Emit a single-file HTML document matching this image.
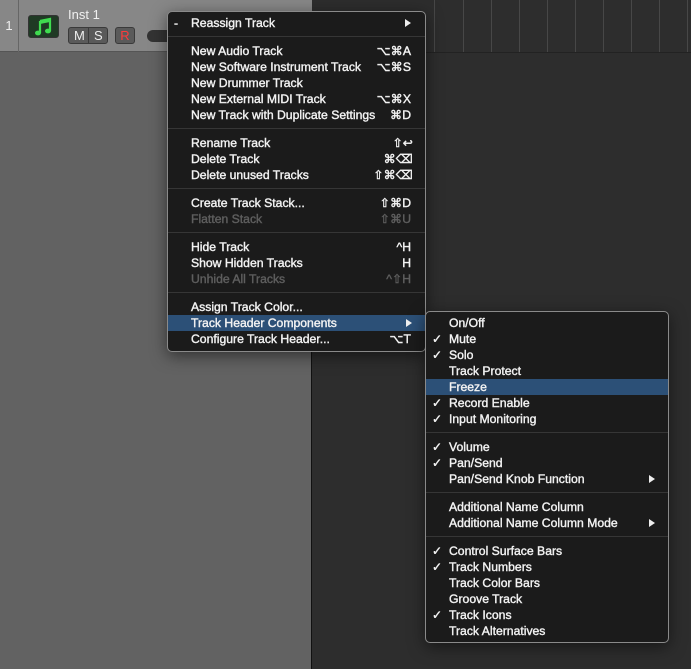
<!DOCTYPE html>
<html><head><meta charset="utf-8"><style>
*{margin:0;padding:0;box-sizing:border-box}
body{width:691px;height:669px;position:relative;overflow:hidden;background:#2d2d2d;font-family:"Liberation Sans",sans-serif;font-size:12.2px;color:#f2f2f2}
.left{position:absolute;left:0;top:0;width:312px;height:669px;background:#626262;border-right:1px solid #111}
.hdr{position:absolute;left:0;top:0;width:312px;height:52px;background:#878787;border-bottom:1px solid #555}
.num{position:absolute;left:0;top:0;width:19px;height:52px;border-right:1px solid #666;color:#eee;font-size:13px;text-align:center;line-height:52px}
.icon{position:absolute;left:28px;top:15px;width:31px;height:23px;background:#1f3a24;border-radius:3px;border:1px solid #333}
.name{position:absolute;left:68px;top:7px;font-size:13px;color:#f0f0f0}
.btn{position:absolute;top:27px;height:17px;background:#5a5a5a;border:1px solid #3a3a3a;border-radius:3px;color:#eee;font-size:13px;line-height:15px;text-align:center}
.knob{position:absolute;left:147px;top:30px;width:30px;height:12px;background:#333;border-radius:6px}
.grid{position:absolute;top:0;width:1px;height:52px;background:#474747}
.hline{position:absolute;left:313px;top:52px;right:0;height:1px;background:#222}
.menu{position:absolute;background:#1b1b1b;border:1px solid #8a8a8a;border-radius:5px;box-shadow:0 4px 16px rgba(0,0,0,.5)}
.r{position:absolute;left:0;right:0;height:16px;line-height:16px;white-space:nowrap;-webkit-text-stroke:0.4px #f2f2f2}
.r.d{color:#5e5e5e;-webkit-text-stroke:0.4px #5e5e5e}
.r.h{background:#2c5077}
.r .t{position:absolute}
.r .k{position:absolute;text-align:right}
.sep{position:absolute;left:0;right:0;height:1px;background:#363636}
.arr{position:absolute;width:0;height:0;border-top:4px solid transparent;border-bottom:4px solid transparent;border-left:6px solid #eee;top:4px}
</style></head><body>
<div class="left"></div>
<div class="hdr">
<div class="num">1</div>
<div class="icon"><svg width="31" height="23" viewBox="0 0 31 23"><path d="M11 5 L21 3 L21 15" stroke="#3fdc4f" stroke-width="2.2" fill="none"/><path d="M11 5 L11 17" stroke="#3fdc4f" stroke-width="2.2"/><ellipse cx="9" cy="17" rx="3" ry="2.4" fill="#3fdc4f"/><ellipse cx="19" cy="15" rx="3" ry="2.4" fill="#3fdc4f"/><path d="M11 5 L21 3 L21 6 L11 8Z" fill="#3fdc4f"/></svg></div>
<div class="name">Inst 1</div>
<div class="btn" style="left:68px;width:40px;"><span style="position:absolute;left:5px">M</span><span style="position:absolute;left:19px;top:0;width:1px;height:15px;background:#3a3a3a"></span><span style="position:absolute;left:25px">S</span></div>
<div class="btn" style="left:115px;width:20px;color:#ff3b3b">R</div>
<div class="knob"></div>
</div>
<div class="grid" style="left:434px"></div><div class="grid" style="left:463px"></div><div class="grid" style="left:491px"></div><div class="grid" style="left:519px"></div><div class="grid" style="left:547px"></div><div class="grid" style="left:575px"></div><div class="grid" style="left:603px"></div><div class="grid" style="left:631px"></div><div class="grid" style="left:659px"></div><div class="grid" style="left:687px"></div>
<div class="hline"></div>

<div class="menu" style="left:167px;top:11px;width:259px;height:341px">
<div class="r" style="top:3px"><span class="t" style="left:6px">-</span><span class="t" style="left:23px">Reassign Track</span><div class="arr" style="left:237px"></div></div>
<div class="sep" style="top:24px"></div>
<div class="r" style="top:31px"><span class="t" style="left:23px">New Audio Track</span><span class="k" style="right:14px">⌥⌘A</span></div>
<div class="r" style="top:47px"><span class="t" style="left:23px">New Software Instrument Track</span><span class="k" style="right:14px">⌥⌘S</span></div>
<div class="r" style="top:63px"><span class="t" style="left:23px">New Drummer Track</span></div>
<div class="r" style="top:79px"><span class="t" style="left:23px">New External MIDI Track</span><span class="k" style="right:14px">⌥⌘X</span></div>
<div class="r" style="top:95px"><span class="t" style="left:23px">New Track with Duplicate Settings</span><span class="k" style="right:14px">⌘D</span></div>
<div class="sep" style="top:116px"></div>
<div class="r" style="top:123px"><span class="t" style="left:23px">Rename Track</span><span class="k" style="right:12px">⇧↩</span></div>
<div class="r" style="top:139px"><span class="t" style="left:23px">Delete Track</span><span class="k" style="right:12px">⌘⌫</span></div>
<div class="r" style="top:155px"><span class="t" style="left:23px">Delete unused Tracks</span><span class="k" style="right:12px">⇧⌘⌫</span></div>
<div class="sep" style="top:176px"></div>
<div class="r" style="top:183px"><span class="t" style="left:23px">Create Track Stack...</span><span class="k" style="right:14px">⇧⌘D</span></div>
<div class="r d" style="top:199px"><span class="t" style="left:23px">Flatten Stack</span><span class="k" style="right:14px">⇧⌘U</span></div>
<div class="sep" style="top:220px"></div>
<div class="r" style="top:227px"><span class="t" style="left:23px">Hide Track</span><span class="k" style="right:14px">^H</span></div>
<div class="r" style="top:243px"><span class="t" style="left:23px">Show Hidden Tracks</span><span class="k" style="right:14px">H</span></div>
<div class="r d" style="top:259px"><span class="t" style="left:23px">Unhide All Tracks</span><span class="k" style="right:14px">^⇧H</span></div>
<div class="sep" style="top:280px"></div>
<div class="r" style="top:287px"><span class="t" style="left:23px">Assign Track Color...</span></div>
<div class="r h" style="top:303px"><span class="t" style="left:23px">Track Header Components</span><div class="arr" style="left:238px"></div></div>
<div class="r" style="top:319px"><span class="t" style="left:23px">Configure Track Header...</span><span class="k" style="right:14px">⌥T</span></div>
</div>

<div class="menu" style="left:425px;top:311px;width:244px;height:332px">
<div class="r" style="top:3px"><span class="t" style="left:23px">On/Off</span></div>
<div class="r" style="top:19px"><span class="t" style="left:6px">✓</span><span class="t" style="left:23px">Mute</span></div>
<div class="r" style="top:35px"><span class="t" style="left:6px">✓</span><span class="t" style="left:23px">Solo</span></div>
<div class="r" style="top:51px"><span class="t" style="left:23px">Track Protect</span></div>
<div class="r h" style="top:67px"><span class="t" style="left:23px">Freeze</span></div>
<div class="r" style="top:83px"><span class="t" style="left:6px">✓</span><span class="t" style="left:23px">Record Enable</span></div>
<div class="r" style="top:99px"><span class="t" style="left:6px">✓</span><span class="t" style="left:23px">Input Monitoring</span></div>
<div class="sep" style="top:120px"></div>
<div class="r" style="top:127px"><span class="t" style="left:6px">✓</span><span class="t" style="left:23px">Volume</span></div>
<div class="r" style="top:143px"><span class="t" style="left:6px">✓</span><span class="t" style="left:23px">Pan/Send</span></div>
<div class="r" style="top:159px"><span class="t" style="left:23px">Pan/Send Knob Function</span><div class="arr" style="left:223px"></div></div>
<div class="sep" style="top:180px"></div>
<div class="r" style="top:187px"><span class="t" style="left:23px">Additional Name Column</span></div>
<div class="r" style="top:203px"><span class="t" style="left:23px">Additional Name Column Mode</span><div class="arr" style="left:223px"></div></div>
<div class="sep" style="top:224px"></div>
<div class="r" style="top:231px"><span class="t" style="left:6px">✓</span><span class="t" style="left:23px">Control Surface Bars</span></div>
<div class="r" style="top:247px"><span class="t" style="left:6px">✓</span><span class="t" style="left:23px">Track Numbers</span></div>
<div class="r" style="top:263px"><span class="t" style="left:23px">Track Color Bars</span></div>
<div class="r" style="top:279px"><span class="t" style="left:23px">Groove Track</span></div>
<div class="r" style="top:295px"><span class="t" style="left:6px">✓</span><span class="t" style="left:23px">Track Icons</span></div>
<div class="r" style="top:311px"><span class="t" style="left:23px">Track Alternatives</span></div>
</div>
</body></html>
